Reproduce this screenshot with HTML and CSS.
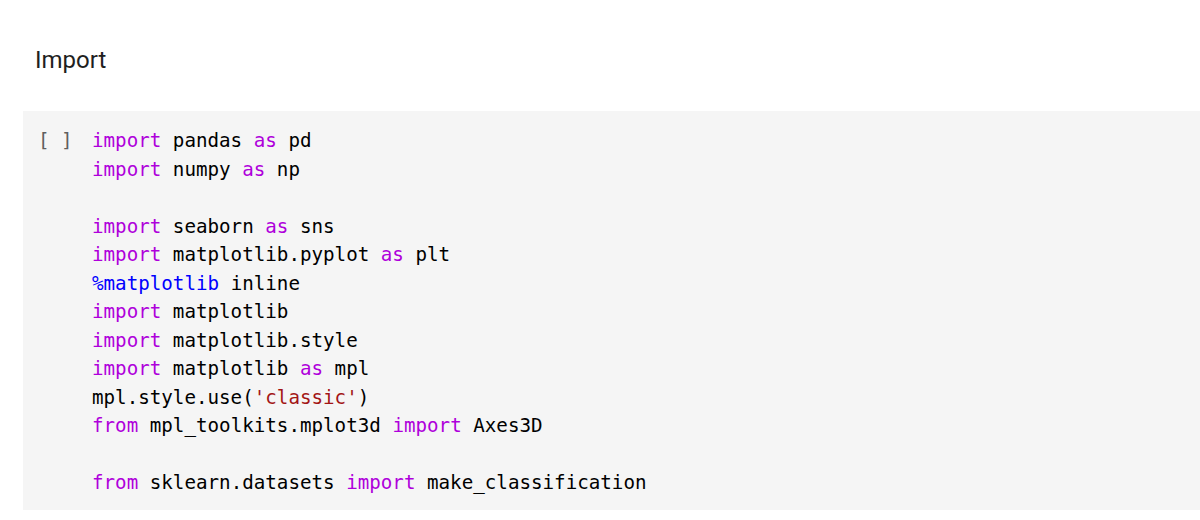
FILE: index.html
```html
<!DOCTYPE html>
<html>
<head>
<meta charset="utf-8">
<link rel="stylesheet" href="styles.css">
</head>
<body>
<div class="page">
  <h2 class="heading">Import</h2>
  <div class="cell">
    <div class="gutter">[ ]</div>
    <div class="code">
      <div class="line"><span class="kw">import</span> pandas <span class="kw">as</span> pd</div>
      <div class="line"><span class="kw">import</span> numpy <span class="kw">as</span> np</div>
      <div class="line"></div>
      <div class="line"><span class="kw">import</span> seaborn <span class="kw">as</span> sns</div>
      <div class="line"><span class="kw">import</span> matplotlib.pyplot <span class="kw">as</span> plt</div>
      <div class="line"><span class="magic">%matplotlib</span> inline</div>
      <div class="line"><span class="kw">import</span> matplotlib</div>
      <div class="line"><span class="kw">import</span> matplotlib.style</div>
      <div class="line"><span class="kw">import</span> matplotlib <span class="kw">as</span> mpl</div>
      <div class="line">mpl.style.use(<span class="str">'classic'</span>)</div>
      <div class="line"><span class="kw">from</span> mpl_toolkits.mplot3d <span class="kw">import</span> Axes3D</div>
      <div class="line"></div>
      <div class="line"><span class="kw">from</span> sklearn.datasets <span class="kw">import</span> make_classification</div>
    </div>
  </div>
</div>
</body>
</html>
```

FILE: styles.css
```css
html, body {
  margin: 0;
  padding: 0;
  background: #ffffff;
}

.page {
  padding-left: 23px;
}

.heading {
  margin: 0;
  padding: 45px 0 0 12px;
  height: 111px;
  box-sizing: border-box;
  font-family: Roboto, "Noto Sans", sans-serif;
  font-weight: 400;
  font-size: 24px;
  line-height: 30px;
  color: #1f1f1f;
}

.cell {
  display: flex;
  background: #f5f5f5;
  padding: 16px 0 12px 15px;
  height: 399px;
  box-sizing: border-box;
}

.gutter {
  flex: none;
  width: 54px;
  font-family: "DejaVu Sans Mono", "Liberation Mono", monospace;
  font-size: 19.2px;
  line-height: 28.5px;
  color: #5f5f5f;
  white-space: pre;
}

.code {
  font-family: "DejaVu Sans Mono", "Liberation Mono", monospace;
  font-size: 19.2px;
  line-height: 28.5px;
  color: #000000;
}

.line {
  height: 28.5px;
  white-space: pre;
}

.kw {
  color: #af00db;
}

.magic {
  color: #0000ff;
}

.str {
  color: #a31515;
}
```
